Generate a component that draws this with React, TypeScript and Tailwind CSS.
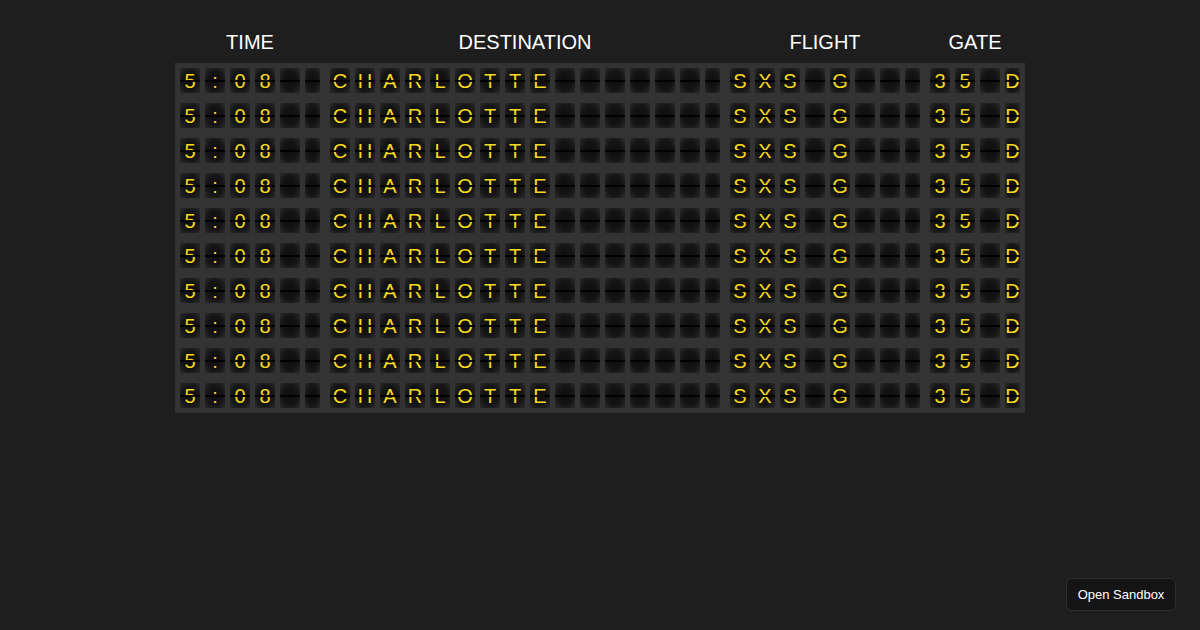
/**
 * Departure board
 *
 * Split-flap style board: four column groups, ten identical rows.
 */

const COLUMNS = [
  { title: "TIME", cells: 6 },
  { title: "DESTINATION", cells: 16 },
  { title: "FLIGHT", cells: 8 },
  { title: "GATE", cells: 4 },
];

const FLIGHT = ["5:08", "CHARLOTTE", "SXS G", "35 D"];

const ROWS = Array.from({ length: 10 }, () => FLIGHT);

function pad(value: string, length: number) {
  const chars = value.split("").map((c) => (c === " " ? "" : c));
  while (chars.length < length) chars.push("");
  return chars.slice(0, length);
}

function FlapCell({ char, last }: { char: string; last: boolean }) {
  return (
    <div
      className={`relative h-[25px] ${last ? "w-[15px]" : "w-[20px]"} flex-shrink-0 overflow-hidden bg-[radial-gradient(ellipse_at_center,#0d0d0d_0%,#151515_55%,#2c2c2c_100%)]`}
    >
      <span className="absolute inset-0 flex items-center justify-center text-[20px] leading-none text-[#f6da20] [font-family:'Liberation_Sans',Arial,sans-serif]">
        {char}
      </span>
      {/* split line */}
      <div className="absolute left-0 right-0 top-[12px] h-[2px] bg-black/90" />
    </div>
  );
}

function CellGroup({ value, cells }: { value: string; cells: number }) {
  const chars = pad(value, cells);
  return (
    <div className="flex gap-[5px]">
      {chars.map((c, i) => (
        <FlapCell key={i} char={c} last={i === chars.length - 1} />
      ))}
    </div>
  );
}

function groupWidth(cells: number) {
  return (cells - 1) * 25 + 15;
}

export default function App() {
  return (
    <div className="relative min-h-[630px] w-full bg-[#1e1e1f] [font-family:'Liberation_Sans',Arial,sans-serif]">
      <div className="mx-auto w-[850px] pt-[28px]">
        {/* Column headers */}
        <div className="mb-[7px] flex gap-[10px] px-[5px]">
          {COLUMNS.map((col) => (
            <div
              key={col.title}
              className="h-[28px] text-center text-[20px] leading-[28px] text-white"
              style={{ width: groupWidth(col.cells) }}
            >
              {col.title}
            </div>
          ))}
        </div>

        {/* Board */}
        <div className="flex flex-col gap-[10px] bg-[#333333] p-[5px]">
          {ROWS.map((row, r) => (
            <div key={r} className="flex gap-[10px]">
              {COLUMNS.map((col, c) => (
                <CellGroup key={col.title} value={row[c]} cells={col.cells} />
              ))}
            </div>
          ))}
        </div>
      </div>

      <button className="absolute bottom-[19px] right-[24px] h-[33px] w-[110px] rounded-md border border-[#2f2f2f] bg-[#141414] text-[13px] text-white">
        Open Sandbox
      </button>
    </div>
  );
}
